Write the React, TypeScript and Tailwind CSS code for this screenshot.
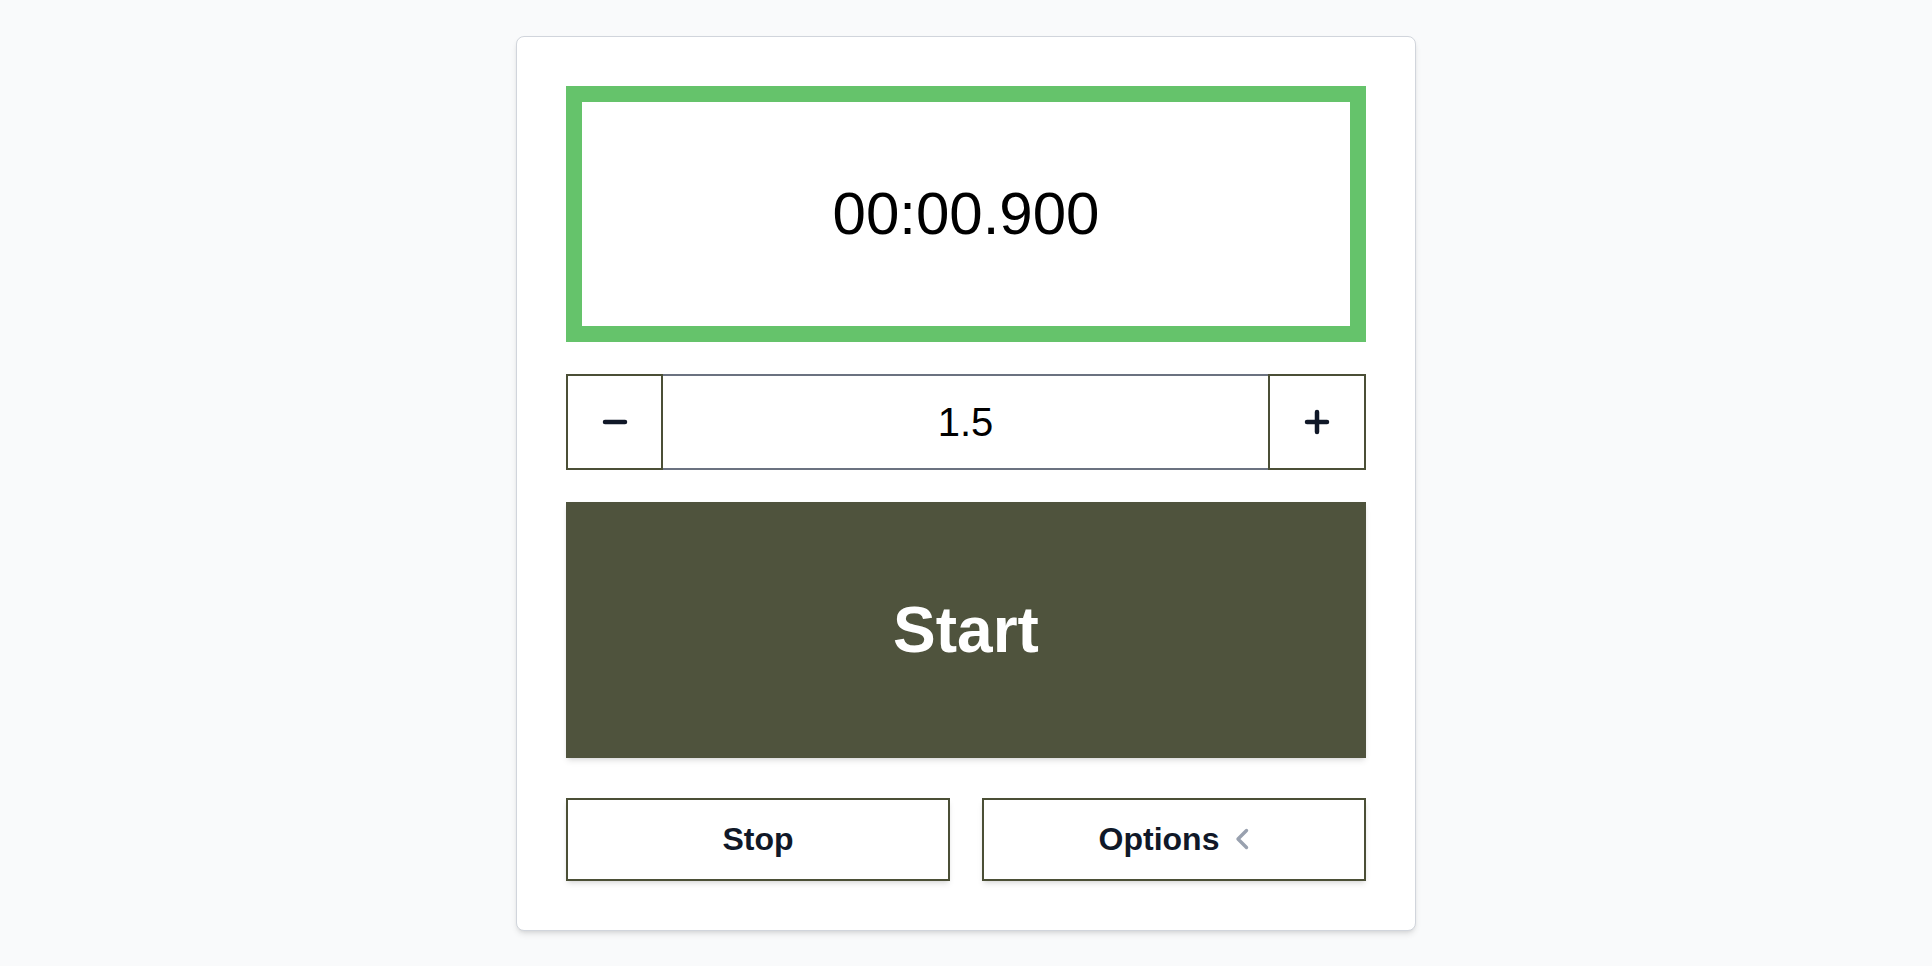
import React from "react";

export default function App() {
  return (
    <div className="min-h-screen bg-[#f9fafb] flex items-center justify-center font-['Liberation_Sans',Arial,sans-serif]">
      <div className="w-[900px] bg-white border border-gray-300 rounded-lg shadow-md p-[49px] flex flex-col">
        <div className="h-64 border-[16px] border-[#65c36b] flex items-center justify-center text-[60px] leading-none text-black">
          00:00.900
        </div>
        <div className="mt-8 h-24 flex">
          <button className="w-[97px] border-2 border-[#4b4f36] bg-white flex items-center justify-center text-gray-900">
            <svg width="26" height="26" viewBox="0 0 26 26" fill="none">
              <line x1="3" y1="13" x2="23" y2="13" stroke="currentColor" strokeWidth="4.5" strokeLinecap="round" />
            </svg>
          </button>
          <div className="flex-1 border-y-2 border-[#6b7280] flex items-center justify-center text-[40px] leading-none text-black">
            1.5
          </div>
          <button className="w-[98px] border-2 border-[#4b4f36] bg-white flex items-center justify-center text-gray-900">
            <svg width="26" height="26" viewBox="0 0 26 26" fill="none">
              <line x1="3" y1="13" x2="23" y2="13" stroke="currentColor" strokeWidth="4.5" strokeLinecap="round" />
              <line x1="13" y1="3" x2="13" y2="23" stroke="currentColor" strokeWidth="4.5" strokeLinecap="round" />
            </svg>
          </button>
        </div>
        <button className="mt-8 h-64 bg-[#4f533d] text-white text-[64px] leading-none font-bold shadow-md">
          Start
        </button>
        <div className="mt-10 grid grid-cols-2 gap-8">
          <button className="h-[83px] border-2 border-[#4b4f36] bg-white shadow-md text-[32px] leading-none font-bold text-gray-900 flex items-center justify-center">
            Stop
          </button>
          <button className="h-[83px] border-2 border-[#4b4f36] bg-white shadow-md text-[32px] leading-none font-bold text-gray-900 flex items-center justify-center gap-[16px]">
            <span>Options</span>
            <svg width="14" height="22" viewBox="0 0 14 22" fill="none" className="text-gray-400">
              <polyline points="11.5,2.5 3,11 11.5,19.5" stroke="currentColor" strokeWidth="3.4" strokeLinecap="round" strokeLinejoin="round" />
            </svg>
          </button>
        </div>
      </div>
    </div>
  );
}
